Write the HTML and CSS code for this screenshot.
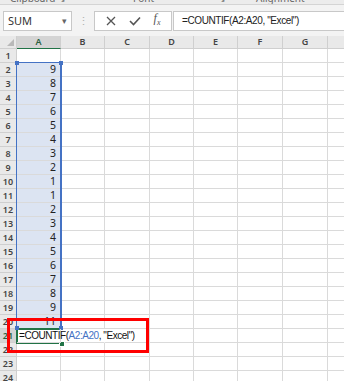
FILE: index.html
```html
<!DOCTYPE html>
<html lang="en">
<head>
    <meta charset="UTF-8">
    <meta name="viewport" content="width=device-width, initial-scale=1.0">
    <title>COUNTIF</title>
    <link rel="stylesheet" href="styles.css">
</head>
<body>

<div class="ribbon">
    <span class="group-label clip">Clipboard</span>
    <span class="launcher">&#8600;</span>
    <span class="group-label font">Font</span>
    <span class="launcher l2">&#8600;</span>
    <span class="group-label align">Alignment</span>
</div>

<div class="formula-bar">
    <div class="name-box">
        <span>SUM</span>
        <span class="caret">&#9662;</span>
    </div>
    <div class="grip">&#8942;</div>
    <div class="fx-box">
        <svg width="10" height="10" viewBox="0 0 10 10"><path d="M1 1 L9 9 M9 1 L1 9" stroke="#555" stroke-width="1.3" fill="none"/></svg>
        <svg width="12" height="10" viewBox="0 0 12 10"><path d="M1 5 L4.5 8.5 L11 1.5" stroke="#555" stroke-width="1.6" fill="none"/></svg>
        <span class="fx">f<sub>x</sub></span>
    </div>
    <div class="formula-input">=COUNTIF(A2:A20, "Excel")</div>
</div>

<div class="sheet-wrap">
    <div class="sheet" id="sheet">
        <div class="range"></div>
        <div class="handle h-tl"></div>
        <div class="handle h-tr"></div>
        <div class="handle h-bl"></div>
        <div class="handle h-br"></div>
        <div class="active-cell"></div>
        <div class="fill-handle"></div>
        <div class="redbox"></div>
    </div>
</div>

<script>
    const cols = ['A', 'B', 'C', 'D', 'E', 'F', 'G', 'H'];
    const values = [9, 8, 7, 6, 5, 4, 3, 2, 1, 1, 2, 3, 4, 5, 6, 7, 8, 9, 11];
    const sheet = document.getElementById('sheet');

    function cell(cls, text) {
        const d = document.createElement('div');
        d.className = cls;
        if (text !== undefined) d.innerHTML = text;
        sheet.appendChild(d);
        return d;
    }

    cell('corner', '<span class="tri"></span>');
    cols.forEach(function (c) {
        cell(c === 'A' ? 'col-head current' : 'col-head', c);
    });

    for (let r = 1; r <= 24; r++) {
        cell(r === 21 ? 'row-head current' : 'row-head', r);
        cols.forEach(function (c) {
            let cls = 'cell';
            let text = '';
            if (c === 'A' && r >= 2 && r <= 20) {
                cls += ' in-range';
                text = values[r - 2];
            }
            if (c === 'A' && r === 21) {
                cls += ' editing';
                text = '=COUNTIF(<span class="ref">A2:A20</span>, "Excel")';
            }
            if (c === 'B' && r === 21) cls += ' no-right';
            cell(cls, text);
        });
    }
</script>

</body>
</html>
```

FILE: styles.css
```css
body {
    margin: 0;
    width: 344px;
    height: 381px;
    overflow: hidden;
    background-color: #fff;
    font-family: "Noto Sans", "Open Sans", sans-serif;
}

.ribbon {
    position: relative;
    height: 4px;
    overflow: hidden;
    background-color: #ececec;
    border-bottom: 1px solid #d4d4d4;
}

.group-label {
    position: absolute;
    top: -7px;
    font-size: 10px;
    line-height: 10px;
    color: #666;
}

.group-label.clip { left: 10px; }
.group-label.font { left: 133px; }
.group-label.align { left: 256px; }

.launcher {
    position: absolute;
    top: -6px;
    left: 58px;
    font-size: 9px;
    line-height: 10px;
    color: #777;
}

.launcher.l2 { left: 218px; }

.formula-bar {
    display: flex;
    align-items: center;
    height: 31px;
    padding: 0 0 0 3px;
    background-color: #f3f3f3;
}

.name-box {
    display: flex;
    justify-content: space-between;
    align-items: center;
    box-sizing: border-box;
    width: 69px;
    height: 20px;
    padding: 0 4px 0 4px;
    background-color: #fff;
    border: 1px solid #c8c8c8;
    font-size: 11px;
    color: #333;
}

.caret {
    font-size: 9px;
    color: #666;
}

.grip {
    width: 22px;
    text-align: center;
    font-size: 11px;
    color: #b0b0b0;
}

.fx-box {
    display: flex;
    justify-content: space-around;
    align-items: center;
    box-sizing: border-box;
    width: 78px;
    height: 20px;
    padding: 0 4px;
    background-color: #fff;
    border: 1px solid #c8c8c8;
}

.fx {
    font-family: "Liberation Serif", serif;
    font-style: italic;
    font-size: 12px;
    color: #555;
    line-height: 10px;
}

.fx sub {
    font-size: 8px;
}

.formula-input {
    flex: 1;
    box-sizing: border-box;
    height: 20px;
    padding-left: 8px;
    margin-left: 1px;
    background-color: #fff;
    border: 1px solid #c8c8c8;
    border-right: none;
    font-family: "Liberation Sans", sans-serif;
    font-size: 10px;
    letter-spacing: -0.4px;
    line-height: 18px;
    color: #222;
}

.sheet-wrap {
    width: 344px;
    overflow: hidden;
}

.sheet {
    position: relative;
    display: grid;
    grid-template-columns: 17px 44px 44px 45px 44px 44px 45px 45px 45px;
    grid-template-rows: 13px;
    grid-auto-rows: 14px;
}

.corner,
.col-head,
.row-head {
    box-sizing: border-box;
    background-color: #e9e9e9;
    border-right: 1px solid #cfcfcf;
    border-bottom: 1px solid #cfcfcf;
    color: #444;
    font-size: 9px;
    font-weight: 600;
    text-align: center;
}

.corner {
    position: relative;
}

.tri {
    position: absolute;
    right: 2px;
    bottom: 2px;
    border-left: 7px solid transparent;
    border-bottom: 7px solid #b9b9b9;
}

.col-head {
    line-height: 12px;
}

.col-head.current {
    background-color: #d4d4d4;
    color: #2b5e3f;
    border-bottom: 1px solid #217346;
}

.row-head {
    line-height: 13px;
}

.row-head.current {
    background-color: #d4d4d4;
    color: #2b5e3f;
}

.cell {
    box-sizing: border-box;
    border-right: 1px solid #dadada;
    border-bottom: 1px solid #dadada;
    font-size: 10.5px;
    line-height: 13px;
    color: #222;
}

.cell.in-range {
    background-color: #dce4f2;
    text-align: right;
    padding-right: 4px;
}

.cell.editing {
    position: relative;
    z-index: 5;
    white-space: nowrap;
    padding-left: 2px;
    font-family: "Liberation Sans", sans-serif;
    font-size: 10px;
    letter-spacing: -0.45px;
    color: #111;
}

.cell.no-right {
    border-right-color: transparent;
}

.ref {
    color: #4472c4;
}

.range {
    position: absolute;
    left: 16px;
    top: 26px;
    width: 46px;
    height: 267px;
    box-sizing: border-box;
    border: 1px solid #4472c4;
    border-right-width: 2px;
    z-index: 3;
}

.handle {
    position: absolute;
    width: 4px;
    height: 4px;
    background-color: #4472c4;
    z-index: 4;
}

.h-tl { left: 15px; top: 25px; }
.h-tr { left: 59px; top: 25px; }
.h-bl { left: 15px; top: 290px; }
.h-br { left: 59px; top: 290px; }

.active-cell {
    position: absolute;
    left: 16px;
    top: 292px;
    width: 46px;
    height: 16px;
    box-sizing: border-box;
    border: 2px solid #217346;
    border-right-color: transparent;
    z-index: 3;
}

.fill-handle {
    position: absolute;
    left: 59px;
    top: 305px;
    width: 4px;
    height: 4px;
    background-color: #217346;
    border: 1px solid #fff;
    z-index: 4;
}

.redbox {
    position: absolute;
    left: 7px;
    top: 282px;
    width: 142px;
    height: 35px;
    box-sizing: border-box;
    border: 3px solid #f00;
    z-index: 6;
}
```
